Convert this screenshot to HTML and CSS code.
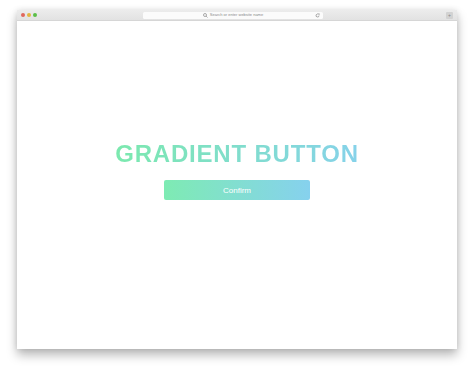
FILE: index.html
```html
<!DOCTYPE html>
<html>
<head>
<meta charset="utf-8">
<link rel="stylesheet" href="styles.css">
</head>
<body>
<div class="stage">
  <div class="window">
    <div class="titlebar">
      <div class="dots">
        <span class="dot red"></span>
        <span class="dot yellow"></span>
        <span class="dot green"></span>
      </div>
      <div class="address">
        <svg class="search-icon" width="5" height="5" viewBox="0 0 10 10"><circle cx="4" cy="4" r="3" fill="none" stroke="#888" stroke-width="1.4"/><line x1="6.2" y1="6.2" x2="9" y2="9" stroke="#888" stroke-width="1.4"/></svg>
        <span class="address-text">Search or enter website name</span>
        <svg class="reload" width="5" height="5" viewBox="0 0 10 10"><path d="M8 5a3 3 0 1 1-1-2.2" fill="none" stroke="#888" stroke-width="1.4"/><path d="M6 1h3v3z" fill="#888"/></svg>
      </div>
      <div class="tab-btn"><span>+</span></div>
    </div>
    <div class="content">
      <h1 class="title">GRADIENT BUTTON</h1>
      <button class="confirm">Confirm</button>
    </div>
  </div>
</div>
</body>
</html>
```
FILE: styles.css
```css
* { box-sizing: border-box; }
html, body { margin: 0; padding: 0; background: #fff; }
body { width: 474px; height: 373px; overflow: hidden; font-family: "Liberation Sans", Arial, sans-serif; }
.stage { padding: 10px 17px 0 17px; }
.window {
  width: 440px;
  height: 339px;
  background: #fff;
  box-shadow: 0 6px 10px rgba(0,0,0,0.28), 0 0 6px rgba(0,0,0,0.10);
  display: flex;
  flex-direction: column;
}
.titlebar {
  height: 11px;
  background: linear-gradient(#ececec, #e2e2e2);
  border-bottom: 1px solid #d6d6d6;
  display: flex;
  align-items: center;
  padding: 0 4px 0 4px;
}
.dots { display: flex; gap: 2px; width: 122px; }
.dot { width: 4px; height: 4px; border-radius: 50%; display: block; }
.red { background: #e0675d; }
.yellow { background: #e3b640; }
.green { background: #5cbf48; }
.address {
  width: 180px;
  height: 7px;
  background: #fbfbfb;
  border-radius: 1.5px;
  display: flex;
  align-items: center;
  justify-content: center;
  position: relative;
  gap: 2px;
}
.address-text { font-size: 4px; color: #8a8a8a; line-height: 1; }
.reload { position: absolute; right: 3px; top: 1px; }
.tab-btn {
  margin-left: auto;
  width: 7px;
  height: 7px;
  background: #d2d2d2;
  border-radius: 1px;
  display: flex;
  align-items: center;
  justify-content: center;
  font-size: 5px;
  color: #888;
  line-height: 1;
}
.content {
  flex: 1;
  display: flex;
  flex-direction: column;
  align-items: center;
  padding-top: 120px;
}
.title {
  margin: 0;
  font-size: 24px;
  font-weight: bold;
  letter-spacing: 0.8px;
  line-height: 26px;
  background: linear-gradient(90deg, #7be9ae, #86d2ea);
  -webkit-background-clip: text;
  background-clip: text;
  color: transparent;
}
.confirm {
  margin-top: 13px;
  width: 146px;
  height: 20px;
  border: none;
  border-radius: 2px;
  background: linear-gradient(90deg, #7eebb3, #86d1ee);
  color: #fff;
  font-family: "Liberation Sans", Arial, sans-serif;
  font-size: 8px;
  padding: 0;
}
```
